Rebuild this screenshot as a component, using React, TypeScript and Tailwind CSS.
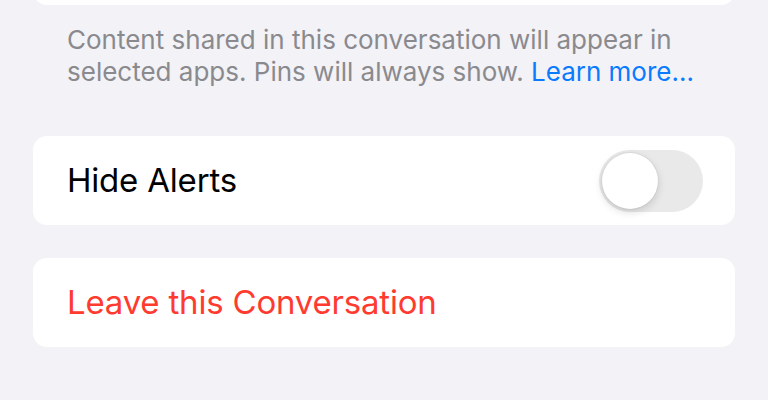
import { useState } from "react";

const Toggle = ({ on, onChange }: { on: boolean; onChange: (v: boolean) => void }) => (
  <button
    onClick={() => onChange(!on)}
    className={`relative flex h-[62px] w-[104px] items-center rounded-full p-[3px] transition-colors ${
      on ? "bg-[#34c759] justify-end" : "bg-[#e9e9ea] justify-start"
    }`}
  >
    <span className="block h-[56px] w-[56px] rounded-full bg-white shadow-[0_3px_8px_rgba(0,0,0,0.15),0_0_0_1px_rgba(0,0,0,0.04)]" />
  </button>
);

export default function App() {
  const [hideAlerts, setHideAlerts] = useState(false);

  return (
    <div
      className="h-[400px] w-full overflow-hidden bg-[#f2f2f7] px-[33px]"
      style={{ fontFamily: "Inter, 'Noto Sans', sans-serif" }}
    >
      {/* bottom of the shared-content card above */}
      <div className="-mt-[40px] h-[45px] rounded-[14px] bg-white" />

      <p className="px-[34px] pt-[19px] text-[26px] leading-[32px] text-[#8a8a8e]">
        Content shared in this conversation will appear in selected apps. Pins will always show.{" "}
        <span className="text-[#0a7aff]">Learn more…</span>
      </p>

      <div className="mt-[48px] flex h-[89px] items-center justify-between rounded-[14px] bg-white pl-[34px] pr-[32px]">
        <span className="text-[33px] tracking-[-0.2px] text-black">Hide Alerts</span>
        <Toggle on={hideAlerts} onChange={setHideAlerts} />
      </div>

      <div className="mt-[33px] flex h-[89px] items-center rounded-[14px] bg-white px-[34px]">
        <span className="text-[33px] tracking-[-0.2px] text-[#ff3b30]">Leave this Conversation</span>
      </div>
    </div>
  );
}
